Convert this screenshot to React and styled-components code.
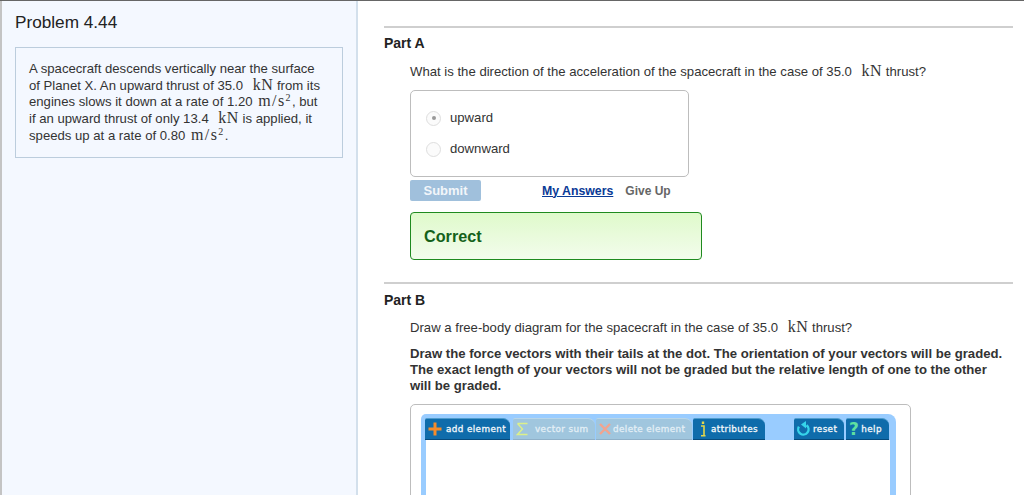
import React from "react";
import styled, { createGlobalStyle } from "styled-components";

const Global = createGlobalStyle`
  html, body { margin: 0; padding: 0; background: #fff; overflow: hidden; }
  body { font-family: "Liberation Sans", Arial, sans-serif; color: #333; }
`;
const Page = styled.div`
  display: flex; width: 1024px; height: 495px; overflow: hidden;
  border-top: 1px solid #666; box-sizing: border-box;
`;
const Sidebar = styled.aside`
  width: 358px; flex: none; box-sizing: border-box; background: #f4f8ff;
  border-left: 2px solid #c4c4c4; border-right: 2px solid #d3e0ec;
  padding: 12px 13px 0 13px;
`;
const Title = styled.h1`
  margin: 0 0 16px; font-size: 17.2px; line-height: 18px; font-weight: 400; color: #222;
`;
const ProblemBox = styled.div`
  width: 328px; height: 111px; box-sizing: border-box;
  border: 1px solid #bccddd; padding: 13px 0 0 13px;
  font-size: 13.15px; line-height: 16.7px; color: #333; white-space: nowrap;
`;
const Main = styled.main`
  flex: 1; padding: 25px 11px 0 26px; min-width: 0;
`;
const Rule = styled.div`
  height: 2px; background: #cfcfcf;
`;
const PartTitle = styled.h2`
  margin: ${(p) => p.$top}px 0 0; font-size: 14px; line-height: 15px; font-weight: 700; color: #222;
`;
const Body = styled.div`
  padding-left: 26px;
`;
const Question = styled.p`
  margin: ${(p) => p.$top}px 0 0; font-size: 13.15px; line-height: 16px; color: #333; white-space: nowrap;
`;
const Strong = styled.p`
  margin: 10px 0 0; font-size: 13.15px; line-height: 16px; font-weight: 700; color: #333; white-space: nowrap;
`;
const Unit = styled.span`
  font-family: "Liberation Serif", "DejaVu Serif", serif; font-size: 16px;
  letter-spacing: ${(p) => p.$ls}px; margin-left: ${(p) => p.$ml}px; color: #333; line-height: 0;
`;
const Sup = styled.sup`
  font-size: 10px; line-height: 0; vertical-align: 5px;
`;
const Options = styled.div`
  margin-top: 10px; width: 279px; height: 87px; box-sizing: border-box;
  border: 1px solid #bdbdbd; border-radius: 5px;
  display: flex; flex-direction: column; gap: 15px; padding: 19px 0 0 15px;
`;
const Option = styled.div`
  display: flex; align-items: center; gap: 9px; font-size: 13.15px; line-height: 16px; color: #333;
`;
const Radio = styled.span`
  width: 15px; height: 15px; box-sizing: border-box; border: 1px solid #dedede; border-radius: 50%;
  background: #fbfbfb; display: flex; align-items: center; justify-content: center;
  &::after { content: ""; display: ${(p) => (p.$on ? "block" : "none")}; width: 4px; height: 4px; border-radius: 50%; background: #999; }
`;
const Actions = styled.div`
  margin-top: 3px; height: 21px; display: flex; align-items: center;
`;
const Submit = styled.button`
  width: 71px; height: 21px; padding: 0; border: 0; border-radius: 2px; background: #a0c0dc;
  color: #f2f6fa; font: 700 13px "Liberation Sans", Arial, sans-serif;
`;
const MyAnswers = styled.a`
  margin-left: 61px; font-size: 12.3px; font-weight: 700; color: #0a3a96; text-decoration: underline;
`;
const GiveUp = styled.span`
  margin-left: 12px; font-size: 12px; font-weight: 700; color: #666;
`;
const Correct = styled.div`
  margin-top: 11px; width: 292px; height: 48px; box-sizing: border-box;
  border: 1px solid #1f8a1f; border-radius: 4px;
  background: linear-gradient(#dffacb, #f3fcec);
  padding-left: 13px; display: flex; align-items: center;
  font-size: 16.2px; font-weight: 700; color: #14611a;
`;
const Spaced = styled.div`
  margin-top: 22px;
`;
const ToolFrame = styled.div`
  margin-top: 10px; width: 501px; height: 120px; box-sizing: border-box;
  border: 1px solid #bdbdbd; border-radius: 5px; padding: 9px 14px 0 10px;
`;
const Tool = styled.div`
  height: 110px; background: #99ccff; border-radius: 5px 8px 0 0; padding: 4px 6px 0 4px;
`;
const TabBar = styled.div`
  display: flex; height: 22px;
`;
const Tab = styled.div`
  width: ${(p) => p.$w}px; margin-left: ${(p) => p.$ml ?? 0}px; flex: none; box-sizing: border-box;
  height: 22px; display: flex; align-items: center; gap: ${(p) => p.$gap ?? 3}px; padding-left: ${(p) => p.$pl ?? 2}px;
  background: ${(p) => (p.$off ? "#a0c6de" : "#0f6cab")};
  border-top: 1px solid ${(p) => (p.$off ? "#b9d6e8" : "#4f9ccc")};
  border-bottom: 1px solid ${(p) => (p.$off ? "#8fb0c8" : "#064a7c")};
  border-radius: 2px 7px 0 0;
  color: ${(p) => (p.$off ? "#e3eff6" : "#f4f9fc")};
  font: 400 8.8px "DejaVu Sans", sans-serif; letter-spacing: .4px; white-space: nowrap;
  -webkit-text-stroke: .3px currentColor;
`;
const Canvas = styled.div`
  height: 85px; width: 464px; margin-left: 1px; background: #fff;
`;
const QMark = styled.span`
  font: 700 17px "DejaVu Sans", sans-serif; color: #5fe0a0; line-height: 18px; -webkit-text-stroke: 0;
`;

const Plus = () => (
  <svg width="14" height="14" viewBox="0 0 14 14"><path d="M5.5 0.5h3v5h5v3h-5v5h-3v-5h-5v-3h5z" fill="#f58b2b" /></svg>
);
const Sigma = () => (
  <svg width="13" height="14" viewBox="0 0 13 14"><path d="M1.5 1.5h10M1.5 1.5l5 5.5-5 5.5h10" fill="none" stroke="#dcf08a" strokeWidth="1.4" /></svg>
);
const Cross = () => (
  <svg width="12" height="12" viewBox="0 0 12 12"><path d="M1 1l10 10M11 1L1 11" stroke="#f2a48f" strokeWidth="2.4" /></svg>
);
const Info = () => (
  <svg width="6" height="16" viewBox="0 0 6 16"><path d="M3 0.5v2.5" stroke="#e4d64a" strokeWidth="2.4" /><path d="M1 5h3v9M1 14.8h4.5" fill="none" stroke="#e4d64a" strokeWidth="1.6" /></svg>
);
const Reset = () => (
  <svg width="15" height="16" viewBox="0 0 15 16"><path d="M10.5 4.2a5.2 5.2 0 1 1-7.6 1.4" fill="none" stroke="#36d4ea" strokeWidth="2.4" /><path d="M10 0v7.5L5 3.5z" fill="#36d4ea" /></svg>
);

const KN = () => <Unit $ml={6} $ls={0.5}>kN</Unit>;
const Accel = () => <Unit $ml={2} $ls={1.4}>m/s<Sup>2</Sup></Unit>;

export default function App() {
  return (
    <>
      <Global />
      <Page>
        <Sidebar>
          <Title>Problem 4.44</Title>
          <ProblemBox>
            A spacecraft descends vertically near the surface<br />
            of Planet X. An upward thrust of 35.0 <KN /> from its<br />
            engines slows it down at a rate of 1.20 <Accel />, but<br />
            if an upward thrust of only 13.4 <KN /> is applied, it<br />
            speeds up at a rate of 0.80 <Accel />.
          </ProblemBox>
        </Sidebar>
        <Main>
          <Rule />
          <PartTitle $top={8}>Part A</PartTitle>
          <Body>
            <Question $top={13}>What is the direction of the acceleration of the spacecraft in the case of 35.0 <KN /> thrust?</Question>
            <Options>
              <Option><Radio $on />upward</Option>
              <Option><Radio />downward</Option>
            </Options>
            <Actions>
              <Submit>Submit</Submit>
              <MyAnswers>My Answers</MyAnswers>
              <GiveUp>Give Up</GiveUp>
            </Actions>
            <Correct>Correct</Correct>
          </Body>
          <Spaced><Rule /></Spaced>
          <PartTitle $top={9}>Part B</PartTitle>
          <Body>
            <Question $top={12}>Draw a free-body diagram for the spacecraft in the case of 35.0 <KN /> thrust?</Question>
            <Strong>
              Draw the force vectors with their tails at the dot. The orientation of your vectors will be graded.<br />
              The exact length of your vectors will not be graded but the relative length of one to the other<br />
              will be graded.
            </Strong>
            <ToolFrame>
              <Tool>
                <TabBar>
                  <Tab $w={85} $gap={4} $pl={3}><Plus />add element</Tab>
                  <Tab $w={82} $ml={3} $off $gap={6} $pl={3}><Sigma />vector sum</Tab>
                  <Tab $w={96} $ml={1} $off $gap={2} $pl={3}><Cross />delete element</Tab>
                  <Tab $w={72} $ml={1} $gap={5} $pl={7}><Info />attributes</Tab>
                  <Tab $w={50} $ml={29} $gap={2} $pl={2}><Reset />reset</Tab>
                  <Tab $w={43} $ml={2} $gap={2} $pl={3}><QMark>?</QMark>help</Tab>
                </TabBar>
                <Canvas />
              </Tool>
            </ToolFrame>
          </Body>
        </Main>
      </Page>
    </>
  );
}
